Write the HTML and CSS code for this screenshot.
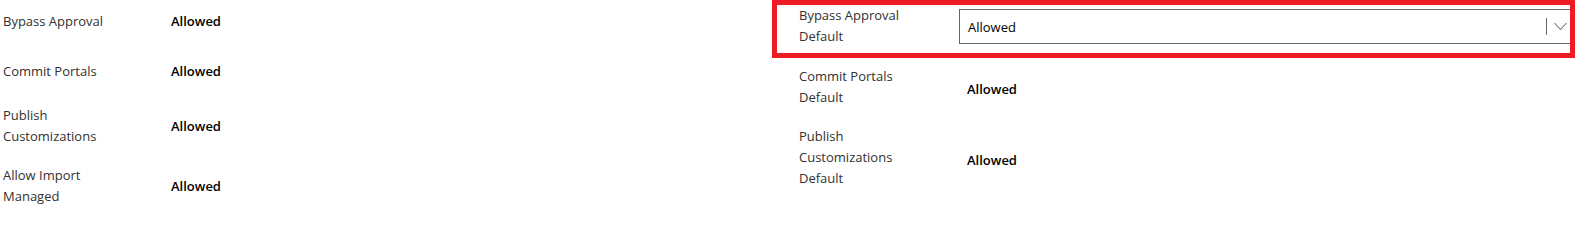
FILE: index.html
```html
<!DOCTYPE html>
<html lang="en">
<head>
  <meta charset="UTF-8">
  <title>Solution settings</title>
  <link rel="stylesheet" href="styles.css">
</head>
<body>
  <div class="page">
    <div class="section">
      <div class="row">
        <div class="label">Bypass Approval</div>
        <div class="value">Allowed</div>
      </div>
      <div class="row">
        <div class="label">Commit Portals</div>
        <div class="value">Allowed</div>
      </div>
      <div class="row">
        <div class="label">Publish<br>Customizations</div>
        <div class="value">Allowed</div>
      </div>
      <div class="row">
        <div class="label">Allow Import<br>Managed</div>
        <div class="value">Allowed</div>
      </div>
    </div>

    <div class="section section-right">
      <div class="row row-first highlight">
        <div class="label">Bypass Approval<br>Default</div>
        <div class="select">
          <span class="select-text">Allowed</span>
          <span class="select-divider"></span>
          <svg class="chevron" width="13" height="9" viewBox="0 0 13 9">
            <path d="M0.5 1 L6.5 7.5 L12.5 1" fill="none" stroke="#737373" stroke-width="1.1"/>
          </svg>
        </div>
      </div>
      <div class="row">
        <div class="label">Commit Portals<br>Default</div>
        <div class="value value-low">Allowed</div>
      </div>
      <div class="row">
        <div class="label">Publish<br>Customizations<br>Default</div>
        <div class="value value-low">Allowed</div>
      </div>
    </div>
  </div>
</body>
</html>
```

FILE: styles.css
```css
body {
  margin: 0;
  background: #fff;
  font-family: "Open Sans", "Noto Sans", sans-serif;
  font-size: 13px;
  color: #323130;
}
.page {
  display: grid;
  grid-template-columns: 1fr 1fr;
  width: 1588px;
}
.section {
  display: flex;
  flex-direction: column;
  gap: 6px;
}
.section-right {
  padding-right: 16px;
}
.row {
  display: flex;
  align-items: center;
  min-height: 32px;
  padding: 5px 0 7px 3px;
}
.section-right .row {
  padding: 6px 0 6px 5px;
}
.section-right .row-first {
  padding-top: 5px;
  padding-bottom: 6px;
  margin-bottom: 1px;
}
.label {
  width: 160px;
  flex: none;
  line-height: 21px;
}
.value {
  padding-left: 8px;
  font-weight: 600;
  color: #000;
}
.value-low {
  margin-top: 4px;
}
.select {
  flex: 1;
  display: flex;
  align-items: center;
  height: 33px;
  margin-top: 1px;
  border: 1px solid #666;
  padding: 0 4px 0 8px;
  color: #000;
}
.select-text {
  flex: 1;
}
.select-divider {
  width: 1px;
  height: 17px;
  background: #666;
  margin-right: 7px;
}
.highlight {
  position: relative;
}
.highlight::after {
  content: "";
  position: absolute;
  top: 0;
  bottom: -5px;
  left: -22px;
  right: -3px;
  border: 5px solid #ed1c24;
  pointer-events: none;
}
```
